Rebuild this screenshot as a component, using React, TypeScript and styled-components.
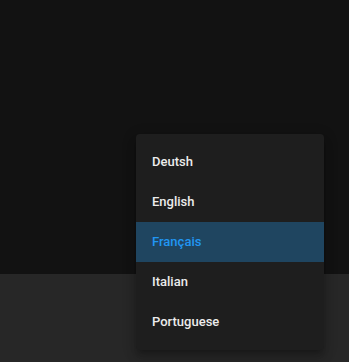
import styled, { createGlobalStyle } from "styled-components";

const Global = createGlobalStyle`
    html, body {
        margin: 0;
        padding: 0;
        background: #121212;
    }
    body {
        font-family: Roboto, "Liberation Sans", sans-serif;
    }
`;

const Page = styled.div`
    position: relative;
    width: 349px;
    height: 362px;
    display: flex;
    flex-direction: column;
    overflow: hidden;
`;

const Main = styled.div`
    height: 274px;
    background: #121212;
`;

const Bar = styled.div`
    flex: 1;
    background: #272727;
`;

const Menu = styled.ul`
    position: absolute;
    left: 136px;
    top: 134px;
    width: 188px;
    margin: 0;
    padding: 8px 0;
    list-style: none;
    background: #1e1e1e;
    border-radius: 4px;
    box-shadow: 0 5px 5px -3px rgba(0, 0, 0, 0.2),
        0 8px 10px 1px rgba(0, 0, 0, 0.14), 0 3px 14px 2px rgba(0, 0, 0, 0.12);
`;

const Item = styled.li<{ $active?: boolean }>`
    height: 40px;
    box-sizing: border-box;
    display: flex;
    align-items: center;
    padding: 0 16px 1px;
    font-size: 13px;
    font-weight: 500;
    color: ${(p) => (p.$active ? "#2196f3" : "#ececec")};
    background: ${(p) => (p.$active ? "#1f4560" : "transparent")};
    cursor: pointer;
`;

const languages = ["Deutsh", "English", "Français", "Italian", "Portuguese"];

export default function App() {
    return (
        <Page>
            <Global />
            <Main />
            <Bar />
            <Menu>
                {languages.map((l) => (
                    <Item key={l} $active={l === "Français"}>
                        {l}
                    </Item>
                ))}
            </Menu>
        </Page>
    );
}
